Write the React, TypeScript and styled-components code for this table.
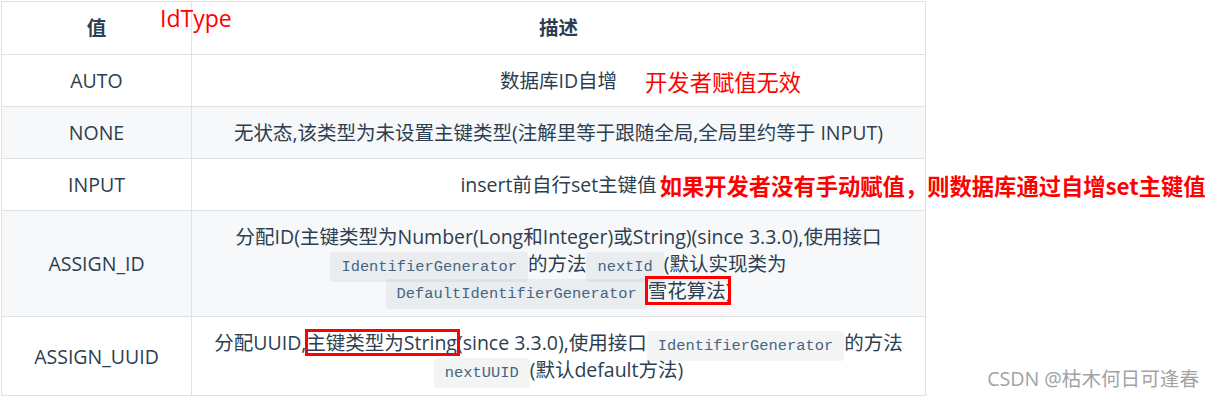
import styled, { createGlobalStyle } from "styled-components";

const GlobalStyle = createGlobalStyle`
  html, body {
    margin: 0;
    background: #fff;
  }
`;

function App() {
  return (
    <Page>
      <GlobalStyle />
      <TableBox>
        <Table>
          <colgroup>
            <col style={{ width: 190 }} />
            <col />
          </colgroup>
          <thead>
            <tr>
              <Th>值</Th>
              <Th>描述</Th>
            </tr>
          </thead>
          <tbody>
            <Row>
              <Td>AUTO</Td>
              <Td>
                <Anchor>
                  数据库ID自增
                  <Note $gap={28}>开发者赋值无效</Note>
                </Anchor>
              </Td>
            </Row>
            <Row $striped>
              <Td>NONE</Td>
              <Td>无状态,该类型为未设置主键类型(注解里等于跟随全局,全局里约等于 INPUT)</Td>
            </Row>
            <Row>
              <Td>INPUT</Td>
              <Td>
                <Anchor>
                  insert前自行set主键值
                  <Note $gap={3} $bold>
                    如果开发者没有手动赋值，则数据库通过自增set主键值
                  </Note>
                </Anchor>
              </Td>
            </Row>
            <Row $striped>
              <Td>ASSIGN_ID</Td>
              <Td>
                分配ID(主键类型为Number(Long和Integer)或String)(since 3.3.0),使用接口
                <Code>IdentifierGenerator</Code>的方法<Code>nextId</Code>(默认实现类为
                <Code>DefaultIdentifierGenerator</Code>
                <Boxed $x={-3} $y={-1} $r={-5}>雪花算法</Boxed>)
              </Td>
            </Row>
            <Row>
              <Td>ASSIGN_UUID</Td>
              <Td>
                分配UUID,<Boxed $x={-1} $y={0} $r={-3}>主键类型为String</Boxed>(since 3.3.0),使用接口
                <Code>IdentifierGenerator</Code>的方法<Code>nextUUID</Code>(默认default方法)
              </Td>
            </Row>
          </tbody>
        </Table>
        <Title>IdType</Title>
      </TableBox>
      <Watermark>CSDN @枯木何日可逢春</Watermark>
    </Page>
  );
}

const Page = styled.div`
  position: relative;
  width: 1212px;
  height: 397px;
  padding: 1px 0 0 1px;
  box-sizing: border-box;
  overflow: hidden;
  font-family: "Open Sans", "Noto Sans CJK SC", sans-serif;
  font-size: 19.5px;
  line-height: 27px;
  color: #2c3e50;
`;

const TableBox = styled.div`
  position: relative;
  width: 925px;
`;

const Table = styled.table`
  width: 925px;
  border-collapse: collapse;
  table-layout: fixed;
`;

const Th = styled.th`
  padding: 12px 12px 13px;
  border: 1px solid #dfe2e5;
  font-weight: 700;
  text-align: center;
`;

const Row = styled.tr<{ $striped?: boolean }>`
  background: ${(props) => (props.$striped ? "#f6f8fa" : "#fff")};
`;

const Td = styled.td`
  padding: 12px 12px;
  border: 1px solid #dfe2e5;
  text-align: center;
  vertical-align: middle;
`;

const Anchor = styled.span`
  position: relative;
  display: inline-block;
`;

const Note = styled.span<{ $gap: number; $bold?: boolean }>`
  position: absolute;
  left: calc(100% + ${(props) => props.$gap}px);
  top: 50%;
  transform: translateY(-50%);
  white-space: nowrap;
  color: #ff0000;
  font-family: "Noto Sans CJK SC", sans-serif;
  font-size: 22.3px;
  font-weight: ${(props) => (props.$bold ? 700 : 400)};
`;

const Code = styled.code`
  padding: 6px 11px;
  border-radius: 3px;
  background: rgba(27, 31, 35, 0.05);
  color: #476582;
  font-family: "Liberation Mono", monospace;
  font-size: 15.4px;
  line-height: 1;
`;

const Boxed = styled.span<{ $x: number; $y: number; $r: number }>`
  position: relative;

  &::after {
    content: "";
    position: absolute;
    left: ${(props) => props.$x}px;
    right: ${(props) => props.$r}px;
    top: ${(props) => props.$y}px;
    bottom: ${(props) => props.$y}px;
    border: 3px solid #ff0000;
  }
`;

const Title = styled.div`
  position: absolute;
  left: 159px;
  top: 2px;
  color: #ff0000;
  font-family: "Open Sans", sans-serif;
  font-size: 23px;
  line-height: 30px;
`;

const Watermark = styled.div`
  position: absolute;
  right: 13px;
  top: 366px;
  color: #a3a3a3;
  font-family: "Open Sans", "Noto Sans CJK SC", sans-serif;
  font-size: 19.6px;
  line-height: 26px;
`;

export default App;
